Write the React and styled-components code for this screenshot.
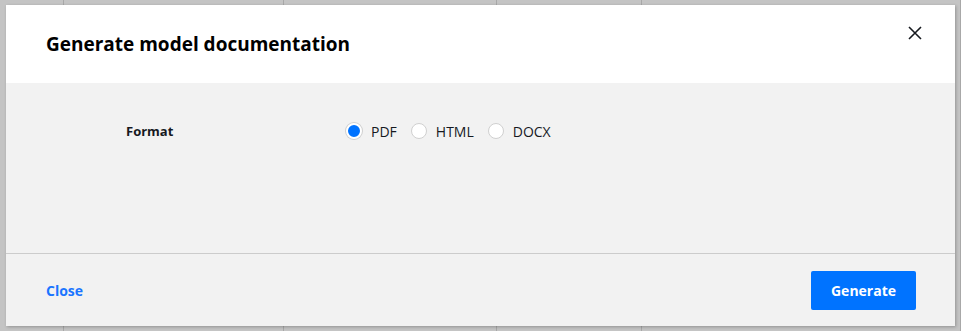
import React, { useState } from 'react';
import styled, { createGlobalStyle } from 'styled-components';

const GlobalStyle = createGlobalStyle`
  html, body {
    margin: 0;
    padding: 0;
    background: #c4c4c4;
    font-family: "Open Sans", "Noto Sans", sans-serif;
  }
`;

const formats = ['PDF', 'HTML', 'DOCX'];

export default function App() {
  const [format, setFormat] = useState('PDF');

  return (
    <>
      <GlobalStyle />
      <Backdrop>
        <GridLines>
          <Cell w={64} />
          <Cell w={220} />
          <Cell w={213} />
          <Cell w={145} />
          <Cell w={319} />
        </GridLines>
        <Modal>
          <Header>
            <Title>Generate model documentation</Title>
            <CloseIcon aria-label="Close">
              <svg width="16" height="16" viewBox="0 0 16 16">
                <path d="M2 2 L14 14 M14 2 L2 14" stroke="#16191f" strokeWidth="1.6" fill="none" />
              </svg>
            </CloseIcon>
          </Header>
          <Body>
            <Row>
              <Label>Format</Label>
              <RadioGroup>
                {formats.map((f) => (
                  <RadioOption key={f} onClick={() => setFormat(f)}>
                    <RadioDot checked={format === f} />
                    <span>{f}</span>
                  </RadioOption>
                ))}
              </RadioGroup>
            </Row>
          </Body>
          <Footer>
            <CloseLink>Close</CloseLink>
            <PrimaryButton>Generate</PrimaryButton>
          </Footer>
        </Modal>
      </Backdrop>
    </>
  );
}

const Backdrop = styled.div`
  position: relative;
  width: 961px;
  height: 331px;
  background: #c4c4c4;
  overflow: hidden;
`;

const GridLines = styled.div`
  display: flex;
  height: 331px;
`;

const Cell = styled.div`
  width: ${(p) => p.w}px;
  border-right: 1px solid #a8a8a8;
  box-sizing: border-box;
`;

const Modal = styled.div`
  position: absolute;
  top: 5px;
  left: 6px;
  width: 949px;
  height: 321px;
  display: flex;
  flex-direction: column;
  background: #f2f2f2;
  box-shadow: 1px 1px 3px rgba(0, 0, 0, 0.25);
`;

const Header = styled.div`
  height: 78px;
  flex-shrink: 0;
  background: #ffffff;
  display: flex;
  align-items: flex-start;
  justify-content: space-between;
  padding: 0 27px 0 40px;
  box-sizing: border-box;
`;

const Title = styled.h2`
  margin: 26px 0 0;
  font-size: 19px;
  font-weight: 700;
  color: #000;
  letter-spacing: 0;
`;

const CloseIcon = styled.button`
  margin-top: 15px;
  border: none;
  background: none;
  padding: 5px;
  display: flex;
  cursor: pointer;
`;

const Body = styled.div`
  height: 171px;
  flex-shrink: 0;
  border-bottom: 1px solid #cccccc;
  padding: 37px 0 0 120px;
  box-sizing: border-box;
`;

const Row = styled.div`
  display: flex;
  align-items: center;
  height: 22px;
`;

const Label = styled.div`
  width: 220px;
  font-size: 13px;
  font-weight: 700;
  color: #16191f;
`;

const RadioGroup = styled.div`
  display: flex;
  align-items: center;
  gap: 14px;
`;

const RadioOption = styled.label`
  display: flex;
  align-items: center;
  gap: 9px;
  font-size: 14px;
  color: #16191f;
  cursor: pointer;
`;

const RadioDot = styled.span`
  width: 16px;
  height: 16px;
  border-radius: 50%;
  box-sizing: border-box;
  background: ${(p) => (p.checked ? '#0073ff' : '#ffffff')};
  border: ${(p) => (p.checked ? '2px solid #ffffff' : '1px solid #d0d0d0')};
  box-shadow: ${(p) => (p.checked ? '0 0 0 1px #d0d0d0' : 'none')};
`;

const Footer = styled.div`
  flex: 1;
  display: flex;
  align-items: center;
  justify-content: space-between;
  padding: 0 39px 0 40px;
`;

const CloseLink = styled.a`
  font-size: 14px;
  font-weight: 700;
  color: #1a75ff;
  cursor: pointer;
  margin-top: 1px;
`;

const PrimaryButton = styled.button`
  width: 105px;
  height: 39px;
  border: none;
  border-radius: 2px;
  background: #0073ff;
  color: #ffffff;
  font-family: inherit;
  font-size: 14px;
  font-weight: 700;
  cursor: pointer;
`;
